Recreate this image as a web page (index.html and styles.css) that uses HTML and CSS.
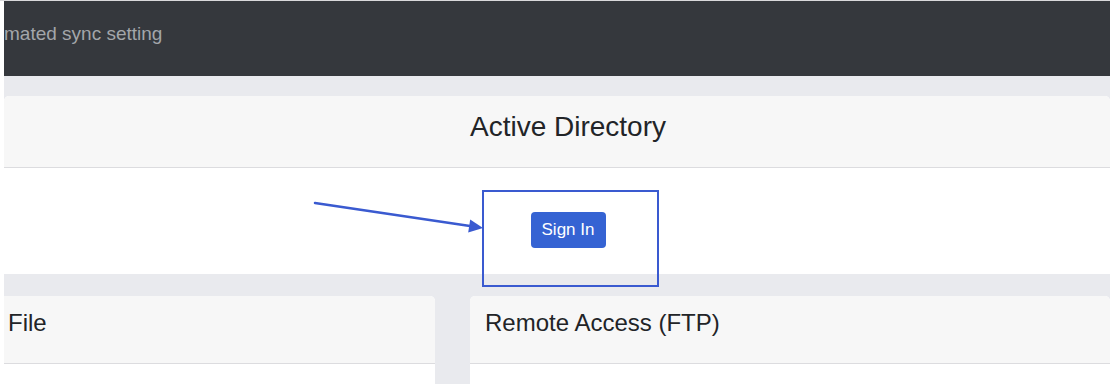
FILE: index.html
```html
<!DOCTYPE html>
<html lang="en">

<head>
  <meta charset="UTF-8" />
  <title>Settings</title>
  <meta name="viewport" content="width=device-width, initial-scale=1.0">
  <link rel="stylesheet" href="styles.css">
</head>

<body>

  <!-- Top Bar -->
  <div class="topbar">
    <span class="topbar-title">mated sync setting</span>
  </div>

  <!-- Settings -->
  <div class="page">
    <div class="card">
      <div class="card-header center big">Active Directory</div>
      <div class="card-body ad-body">
        <button class="btn">Sign In</button>
      </div>
    </div>

    <div class="row">
      <div class="card">
        <div class="card-header cut">File</div>
        <div class="card-body"></div>
      </div>
      <div class="card">
        <div class="card-header">Remote Access (FTP)</div>
        <div class="card-body"></div>
      </div>
    </div>
  </div>

  <!-- Annotation -->
  <svg class="annotation" width="1110" height="384" viewBox="0 0 1110 384">
    <line x1="315" y1="203" x2="470" y2="226" stroke="#3a5ad0" stroke-width="2.5" stroke-linecap="round" />
    <polygon points="483,228 468.2,232.6 470.2,219.6" fill="#3a5ad0" />
    <rect x="483" y="191" width="175" height="95" fill="none" stroke="#3a5ad0" stroke-width="2" />
  </svg>

</body>

</html>
```

FILE: styles.css
```css
* {
  margin: 0;
  padding: 0;
  box-sizing: border-box;
  font-family: 'Liberation Sans', Arial, sans-serif;
}

html {
  overflow: hidden;
}

body {
  height: 384px;
  background: #fff;
  padding-left: 4px;
  border-top: 1px solid #d9d9db;
  position: relative;
  overflow: hidden;
}

/* === Top Bar === */
.topbar {
  height: 75px;
  background: #35383d;
  display: flex;
  align-items: center;
  padding-bottom: 10px;
}

.topbar-title {
  color: #a3a6aa;
  font-size: 19px;
}

/* === Page === */
.page {
  background: #e9eaee;
  padding-top: 20px;
  height: 308px;
}

.card {
  background: #fff;
  border-radius: 5px 5px 0 0;
}

.card-header {
  height: 68px;
  background: #f7f7f7;
  border-bottom: 1px solid #dcdcdf;
  border-radius: 5px 5px 0 0;
  color: #222427;
  font-size: 24px;
  padding: 13px 15px 0;
}

/* card is cut by the screen edge, so its centre sits right of the middle */
.card-header.center {
  text-align: center;
  padding-left: 37px;
}

.card-header.big {
  height: 72px;
  font-size: 28px;
  padding-top: 15px;
}

.card-header.cut {
  padding-left: 4px;
  border-top-left-radius: 0;
}

.card-body {
  height: 20px;
}

.ad-body {
  height: 106px;
  display: flex;
  justify-content: center;
  padding-top: 44px;
  padding-left: 22px;
}

.btn {
  width: 75px;
  height: 36px;
  background: #3563d3;
  color: #fff;
  border: none;
  border-radius: 4px;
  font-size: 17px;
}

.row {
  display: grid;
  grid-template-columns: 431px 1fr;
  gap: 35px;
  padding-top: 22px;
}

/* === Annotation === */
.annotation {
  position: absolute;
  top: -1px;
  left: 0;
}
```
